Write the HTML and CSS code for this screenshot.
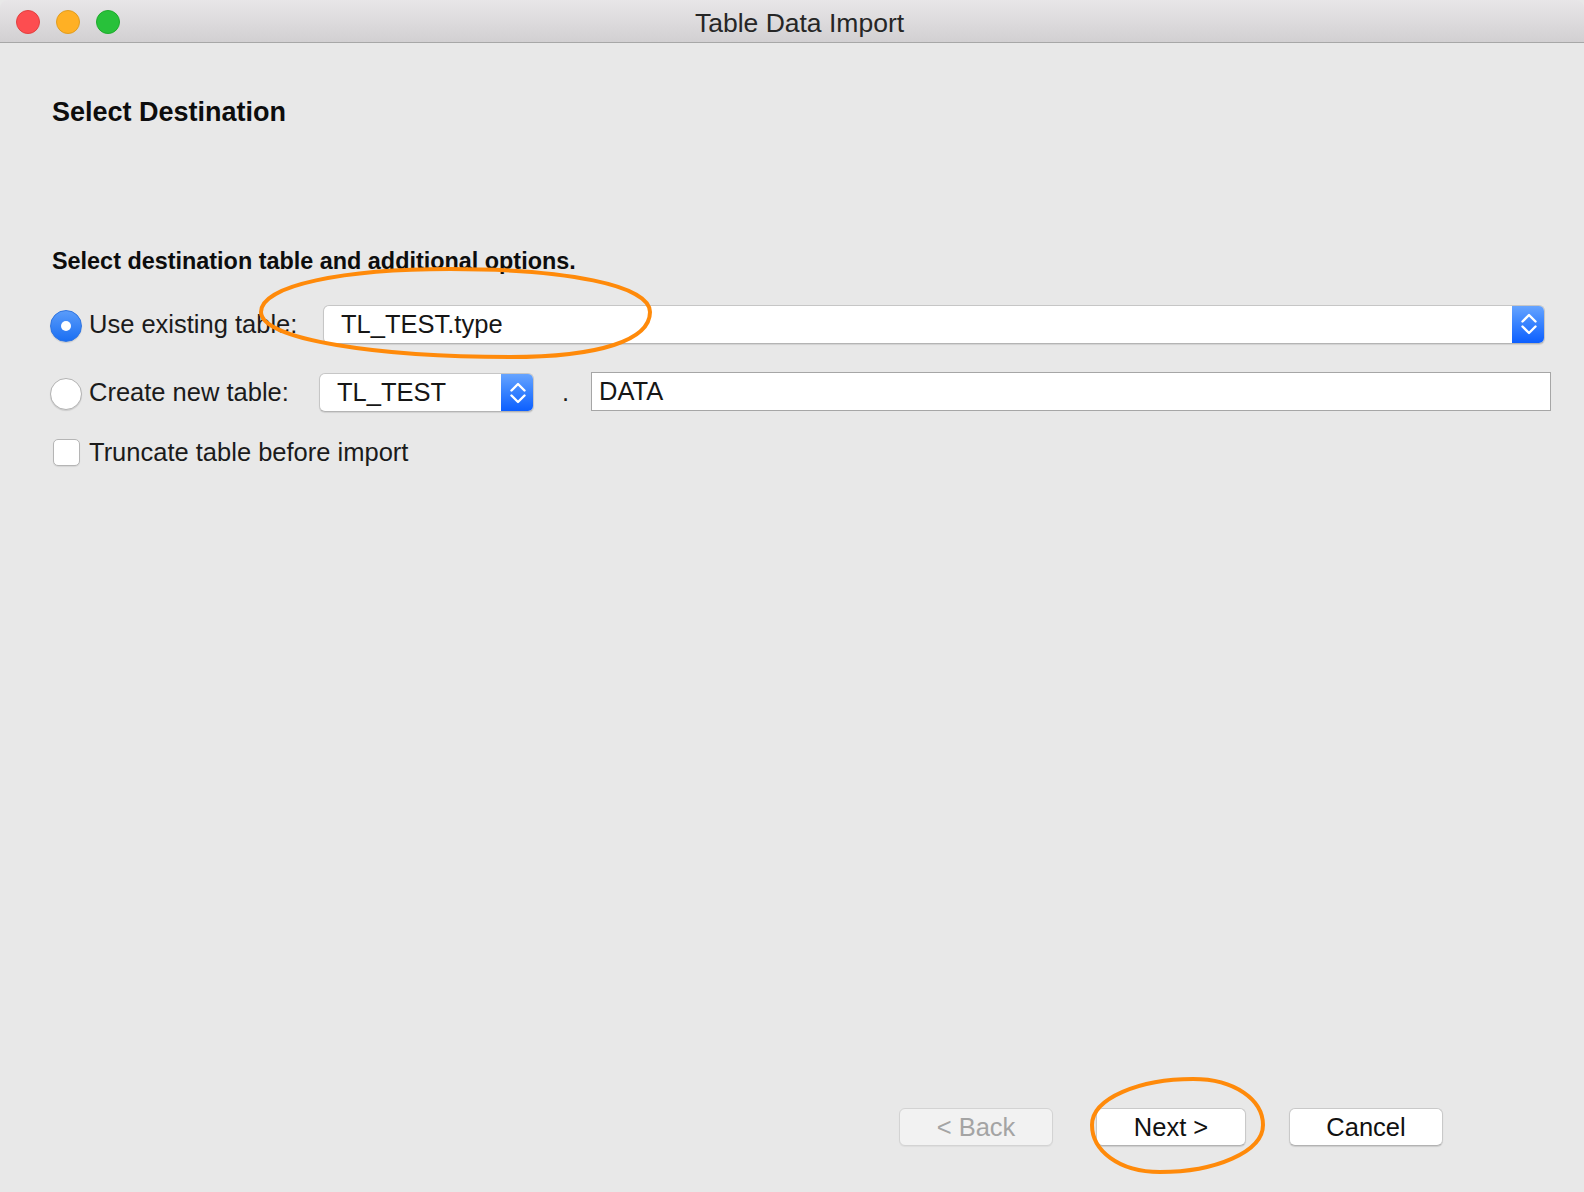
FILE: index.html
```html
<!DOCTYPE html>
<html lang="en">
<head>
<meta charset="utf-8">
<title>Table Data Import</title>
<link rel="stylesheet" href="styles.css">
</head>
<body>
<div class="window">
  <div class="titlebar">
    <div class="lights">
      <span class="light red"></span>
      <span class="light yellow"></span>
      <span class="light green"></span>
    </div>
    <div class="title">Table Data Import</div>
    <div class="title-spacer"></div>
  </div>

  <div class="content">
    <h1 class="heading">Select Destination</h1>
    <p class="subheading">Select destination table and additional options.</p>

    <div class="options">
      <div class="row row-existing">
        <span class="radio checked"></span>
        <span class="label">Use existing table:</span>
        <div class="select select-wide">
          <span class="select-value">TL_TEST.type</span>
          <span class="stepper">
            <svg width="16" height="24" viewBox="0 0 16 24"><path d="M1.5 9.5 L8 3 L14.5 9.5 M1.5 14.5 L8 21 L14.5 14.5" fill="none" stroke="#fff" stroke-width="2.4" stroke-linecap="round" stroke-linejoin="round"/></svg>
          </span>
        </div>
      </div>

      <div class="row row-new">
        <span class="radio"></span>
        <span class="label">Create new table:</span>
        <div class="select select-schema">
          <span class="select-value">TL_TEST</span>
          <span class="stepper">
            <svg width="16" height="24" viewBox="0 0 16 24"><path d="M1.5 9.5 L8 3 L14.5 9.5 M1.5 14.5 L8 21 L14.5 14.5" fill="none" stroke="#fff" stroke-width="2.4" stroke-linecap="round" stroke-linejoin="round"/></svg>
          </span>
        </div>
        <span class="dot">.</span>
        <div class="textfield">DATA</div>
      </div>

      <div class="row row-truncate">
        <span class="checkbox"></span>
        <span class="label">Truncate table before import</span>
      </div>
    </div>
  </div>

  <div class="footer">
    <button class="btn disabled">&lt; Back</button>
    <button class="btn btn-next">Next &gt;</button>
    <button class="btn">Cancel</button>
  </div>

  <svg class="annotations" width="1584" height="1192" viewBox="0 0 1584 1192">
    <path d="M261 312 C261 285 345 269 450 269 C565 269 650 285 650 312 C650 340 600 357 510 357 C380 357 261 340 261 312 Z" fill="none" stroke="#ff8a0a" stroke-width="4"/>
    <path d="M1092 1125 C1092 1098 1140 1079 1193 1079 C1235 1079 1263 1100 1263 1125 C1263 1152 1215 1172 1160 1172 C1118 1172 1092 1150 1092 1125 Z" fill="none" stroke="#ff8a0a" stroke-width="4"/>
  </svg>
</div>
</body>
</html>
```

FILE: styles.css
```css
* {
  box-sizing: border-box;
}

html, body {
  margin: 0;
  padding: 0;
}

body {
  font-family: "Liberation Sans", Arial, Helvetica, sans-serif;
  color: #1b1b1b;
  background: #e8e8e8;
}

.window {
  position: relative;
  width: 1584px;
  height: 1192px;
  display: flex;
  flex-direction: column;
  background: #e8e8e8;
  border-radius: 8px 8px 0 0;
  overflow: hidden;
}

/* Title bar */
.titlebar {
  height: 43px;
  flex: none;
  display: flex;
  align-items: center;
  background: linear-gradient(#e8e6e8, #d2d0d2);
  border-bottom: 1px solid #a7a7a7;
}

.lights {
  width: 120px;
  display: flex;
  gap: 16px;
  padding-left: 16px;
  padding-top: 1px;
}

.light {
  width: 24px;
  height: 24px;
  border-radius: 50%;
}

.light.red {
  background: #fd4d50;
  border: 1px solid #e2403f;
}

.light.yellow {
  background: #ffb024;
  border: 1px solid #e19d1f;
}

.light.green {
  background: #28c13a;
  border: 1px solid #1eab2c;
}

.title {
  flex: 1;
  text-align: center;
  font-size: 26.5px;
  line-height: 30px;
  padding-top: 3px;
  color: #262626;
}

.title-spacer {
  width: 105px;
}

/* Content */
.content {
  flex: 1;
  padding: 0 33px 0 52px;
}

.heading {
  margin: 53px 0 0;
  font-size: 27px;
  line-height: 32px;
  font-weight: bold;
  color: #0d0d0d;
}

.subheading {
  margin: 119px 0 0;
  font-size: 23.4px;
  line-height: 28px;
  font-weight: bold;
  color: #0d0d0d;
}

.options {
  margin-top: 29px;
  display: flex;
  flex-direction: column;
}

.row {
  display: flex;
  align-items: center;
  font-size: 25.5px;
}

.row-existing {
  height: 40px;
  padding-top: 1px;
}

.row-new {
  height: 40px;
  margin-top: 28px;
  padding-top: 1px;
}

.row-truncate {
  height: 28px;
  margin-top: 26px;
}

.label {
  width: 230px;
  flex: none;
  white-space: nowrap;
  color: #1b1b1b;
}

.row-truncate .label {
  width: auto;
}

.radio {
  flex: none;
  width: 32px;
  height: 32px;
  margin-left: -2.5px;
  margin-right: 7.5px;
  border-radius: 50%;
  background: #fff;
  border: 1px solid #b3b3b3;
  box-shadow: 0 1px 1px rgba(0, 0, 0, 0.12);
  display: flex;
  align-items: center;
  justify-content: center;
}

.row-existing .radio {
  margin-top: 2px;
}

.row-new .radio {
  margin-top: 2px;
}

.radio.checked {
  background: linear-gradient(#5a9cfa, #1a6ff3);
  border-color: #2f74e0;
}

.radio.checked::after {
  content: "";
  width: 10px;
  height: 10px;
  border-radius: 50%;
  background: #fff;
}

.checkbox {
  flex: none;
  width: 27px;
  height: 27px;
  margin-left: 0.5px;
  margin-right: 9.5px;
  background: #fff;
  border: 1px solid #b5b5b5;
  border-radius: 5px;
  box-shadow: 0 1px 1px rgba(0, 0, 0, 0.08);
}

/* Popup selects */
.select {
  height: 39px;
  display: flex;
  align-items: center;
  background: #fff;
  border: 1px solid #c6c6c6;
  border-bottom-color: #b4b4b4;
  border-radius: 6px;
  box-shadow: 0 1px 1px rgba(0, 0, 0, 0.10);
  overflow: hidden;
}

.select-wide {
  flex: 1;
  margin-left: 4px;
  margin-right: 6px;
  margin-top: -1px;
}

.select-schema {
  width: 215px;
  flex: none;
}

.select-value {
  flex: 1;
  padding-left: 17px;
  font-size: 25.5px;
  color: #161616;
  white-space: nowrap;
}

.stepper {
  width: 33px;
  align-self: stretch;
  margin: -1px -1px -1px 0;
  display: flex;
  align-items: center;
  justify-content: center;
  background: linear-gradient(#69a6ff, #3b85ff 45%, #0a5dff);
  border-radius: 0 6px 6px 0;
}

.dot {
  width: 57px;
  flex: none;
  padding-left: 28px;
  color: #1b1b1b;
}

.textfield {
  flex: 1;
  height: 39px;
  margin-top: -2px;
  display: flex;
  align-items: center;
  padding-left: 7px;
  background: #fff;
  border: 1px solid #a6a6a6;
  font-size: 25.5px;
  color: #161616;
}

/* Footer buttons */
.footer {
  flex: none;
  display: flex;
  justify-content: flex-end;
  gap: 43px;
  padding: 0 141px 46px 0;
}

.btn {
  width: 154px;
  height: 38px;
  font-family: "Liberation Sans", Arial, Helvetica, sans-serif;
  font-size: 25.5px;
  color: #111;
  background: #fff;
  border: 1px solid #c9c9c9;
  border-bottom-color: #b3b3b3;
  border-radius: 6px;
  box-shadow: 0 1px 1px rgba(0, 0, 0, 0.12);
  padding: 0;
  display: flex;
  align-items: center;
  justify-content: center;
}

.btn-next {
  width: 150px;
}

.btn.disabled {
  background: #f2f2f2;
  color: #a4a4a4;
  border-color: #d3d3d3;
  box-shadow: 0 1px 1px rgba(0, 0, 0, 0.05);
}

/* Annotation overlay */
.annotations {
  position: absolute;
  left: 0;
  top: 0;
  pointer-events: none;
}
```
